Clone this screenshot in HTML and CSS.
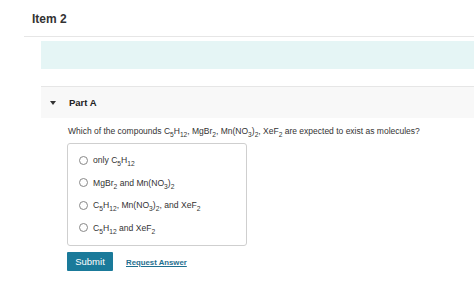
FILE: index.html
```html
<!DOCTYPE html>
<html lang="en">
<head>
  <meta charset="UTF-8">
  <meta name="viewport" content="width=device-width, initial-scale=1.0">
  <title>Item 2</title>
  <link rel="stylesheet" href="styles.css">
</head>
<body>
  <div class="item-header">
    <h2 class="item-title">Item 2</h2>
  </div>
  <div class="item-body">
    <div class="intro-band"></div>
    <div class="part-header">
      <span class="part-arrow"></span>
      <span class="part-title">Part A</span>
    </div>
    <div class="part-content">
      <p class="question">Which of the compounds C<sub>5</sub>H<sub>12</sub>, MgBr<sub>2</sub>, Mn(NO<sub>3</sub>)<sub>2</sub>, XeF<sub>2</sub> are expected to exist as molecules?</p>
      <div class="options">
        <label class="option"><span class="radio"></span><span>only C<sub>5</sub>H<sub>12</sub></span></label>
        <label class="option"><span class="radio"></span><span>MgBr<sub>2</sub> and Mn(NO<sub>3</sub>)<sub>2</sub></span></label>
        <label class="option"><span class="radio"></span><span>C<sub>5</sub>H<sub>12</sub>, Mn(NO<sub>3</sub>)<sub>2</sub>, and XeF<sub>2</sub></span></label>
        <label class="option"><span class="radio"></span><span>C<sub>5</sub>H<sub>12</sub> and XeF<sub>2</sub></span></label>
      </div>
      <div class="actions">
        <button class="submit-button">Submit</button>
        <a class="request-link" href="#">Request Answer</a>
      </div>
    </div>
  </div>
</body>
</html>
```

FILE: styles.css
```css
body {
  margin: 0;
  padding: 0;
  background-color: #fff;
  font-family: 'Liberation Sans', Arial, sans-serif;
  color: #333;
}
.item-header {
  margin-left: 24px;
  height: 36px;
  padding-left: 8px;
  border-bottom: 1px solid #e6e6e6;
  display: flex;
  align-items: center;
}
.item-title {
  margin: 2px 0 0;
  font-size: 12px;
  font-weight: bold;
  color: #333;
}
.item-body {
  margin-left: 41px;
}
.intro-band {
  margin-top: 4px;
  height: 28px;
  background-color: #e5f5f5;
}
.part-header {
  margin-top: 17px;
  height: 31px;
  border-top: 1px solid #e6e6e6;
  background-color: #f8f8f8;
  display: flex;
  align-items: center;
}
.part-arrow {
  width: 0;
  height: 0;
  margin-left: 9px;
  border-left: 3.5px solid transparent;
  border-right: 3.5px solid transparent;
  border-top: 4px solid #333;
}
.part-title {
  margin-left: 13px;
  font-size: 9.5px;
  font-weight: bold;
  color: #222;
}
.part-content {
  padding-left: 26px;
}
.question {
  margin: 7px 0 0 1px;
  font-size: 8.5px;
  line-height: 12px;
  color: #333;
}
sub {
  font-size: 78%;
  line-height: 0;
}
.options {
  margin-top: 6px;
  width: 180px;
  height: 103px;
  border: 1px solid #cfcfcf;
  border-radius: 3px;
  padding: 10px 0 0 11px;
  box-sizing: border-box;
  display: flex;
  flex-direction: column;
  gap: 10px;
}
.option {
  display: flex;
  align-items: center;
  height: 12.5px;
  font-size: 8.6px;
  color: #333;
}
.radio {
  flex-shrink: 0;
  width: 7px;
  height: 7px;
  border: 1px solid #888;
  border-radius: 50%;
  margin-right: 5px;
}
.actions {
  margin-top: 6px;
  display: flex;
  align-items: center;
  gap: 13px;
}
.submit-button {
  width: 46px;
  height: 19px;
  padding: 0;
  border: none;
  border-radius: 1px;
  background-color: #1a7a9a;
  color: #fff;
  font-family: 'Liberation Sans', Arial, sans-serif;
  font-size: 9.5px;
  cursor: pointer;
}
.request-link {
  font-size: 7.8px;
  font-weight: bold;
  color: #1f6f8f;
  text-decoration: underline;
  margin-top: 1px;
}
```
